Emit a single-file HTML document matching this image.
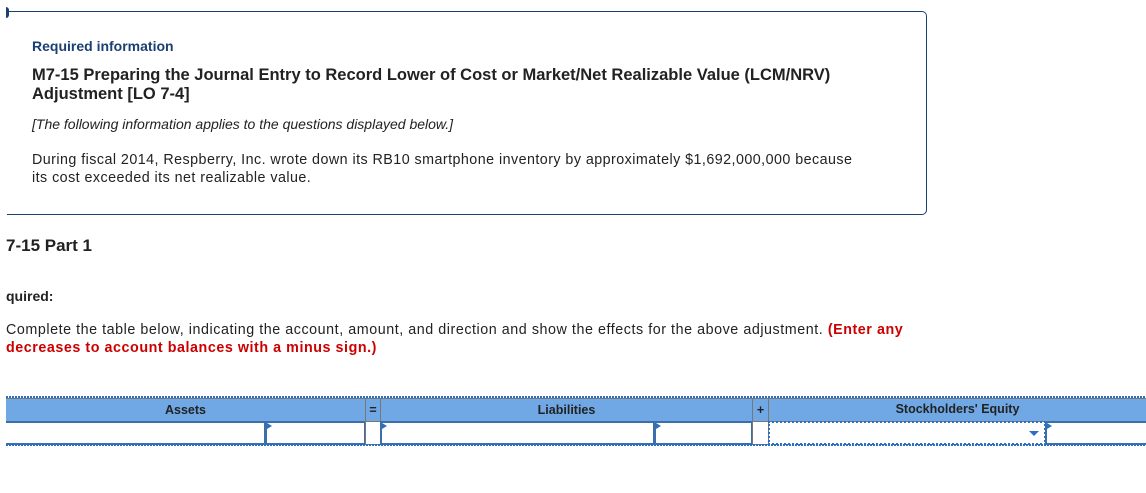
<!DOCTYPE html>
<html><head><style>
body{margin:0;width:1146px;height:493px;background:#fff;font-family:"Liberation Sans",sans-serif;color:#222;position:relative;overflow:hidden}
.a{position:absolute}
.box{left:7px;top:11px;width:919px;height:202px;border:1px solid #1c3f73;border-left:none;border-radius:0 5px 5px 0}
.mark{left:6px;top:7px;width:3px;height:11px;background:#1c3f73;border-radius:0 3px 3px 0}
.t{font-size:14px;line-height:18px}
.hd{background:#6fa8e4;font-weight:bold;font-size:12.5px;text-align:center;line-height:22px;color:#222;border:1px solid #777;box-sizing:border-box}
.in{border:2px solid #3a6faa;box-sizing:border-box;background:#fff}
.flag{position:absolute;left:0;top:0;width:0;height:0;border-left:5px solid #2a6fc2;border-top:3px solid transparent;border-bottom:3px solid transparent}
.dot{height:2px;background:repeating-linear-gradient(90deg,#2a6fc2 0 2px,transparent 2px 3px)}
</style></head><body>
<div class="a box"></div><div class="a mark"></div>
<div class="a t" style="left:32px;top:37px;color:#1c3f73;font-weight:bold">Required information</div>
<div class="a" style="left:32px;top:66px;font-size:16.5px;line-height:19px;font-weight:bold;width:860px">M7-15 Preparing the Journal Entry to Record Lower of Cost or Market/Net Realizable Value (LCM/NRV) Adjustment [LO 7-4]</div>
<div class="a t" style="left:32px;top:115px;font-style:italic">[The following information applies to the questions displayed below.]</div>
<div class="a t" style="left:32px;top:151px;width:832px;font-size:14.3px;letter-spacing:0.45px">During fiscal 2014, Respberry, Inc. wrote down its RB10 smartphone inventory by approximately $1,692,000,000 because its cost exceeded its net realizable value.</div>
<div class="a" style="left:6px;top:236px;font-size:17px;font-weight:bold">7-15 Part 1</div>
<div class="a t" style="left:6px;top:287px;font-weight:bold">quired:</div>
<div class="a t" style="left:6px;top:321px;width:930px;font-size:14.3px;letter-spacing:0.55px">Complete the table below, indicating the account, amount, and direction and show the effects for the above adjustment. <b style="color:#c00">(Enter any decreases to account balances with a minus sign.)</b></div>
<div class="a dot" style="left:6px;top:396px;width:1140px"></div>
<div class="a hd" style="left:6px;top:398px;width:360px;height:24px;border-left:none">Assets</div>
<div class="a hd" style="left:365px;top:398px;width:16px;height:24px">=</div>
<div class="a hd" style="left:380px;top:398px;width:373px;height:24px">Liabilities</div>
<div class="a hd" style="left:752px;top:398px;width:17px;height:24px">+</div>
<div class="a hd" style="left:768px;top:398px;width:378px;height:24px;line-height:21px;border-right:none">Stockholders' Equity</div>
<div class="a in" style="left:6px;top:421px;width:260px;height:24px;border-left:none"></div>
<div class="a in" style="left:265px;top:421px;width:101px;height:24px"><div class="flag"></div></div>
<div class="a" style="left:365px;top:421px;width:16px;height:24px;border:1px solid #777;box-sizing:border-box"></div>
<div class="a in" style="left:380px;top:421px;width:275px;height:24px"><div class="flag"></div></div>
<div class="a in" style="left:654px;top:421px;width:99px;height:24px"><div class="flag"></div></div>
<div class="a" style="left:752px;top:421px;width:17px;height:24px;border:1px solid #777;box-sizing:border-box"></div>
<div class="a" style="left:768px;top:421px;width:278px;height:24px;border:2px dotted #2a6fc2;box-sizing:border-box"><div style="position:absolute;right:5px;top:8px;border-top:5px solid #2a6fc2;border-left:5px solid transparent;border-right:5px solid transparent"></div></div>
<div class="a in" style="left:1045px;top:421px;width:101px;height:24px;border-right:none"><div class="flag"></div></div>
<div class="a dot" style="left:6px;top:444px;width:1140px"></div>
</body></html>
